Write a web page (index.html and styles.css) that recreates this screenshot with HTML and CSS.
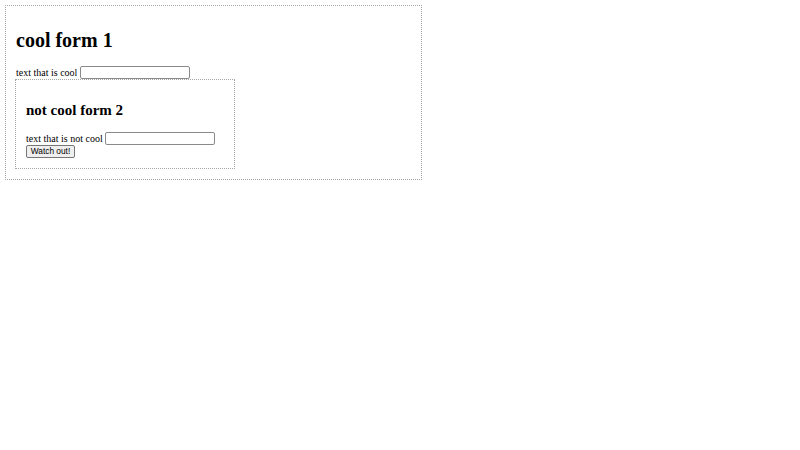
FILE: index.html
```html
<!DOCTYPE html>
<html>
<head>
<meta charset="utf-8">
<title>forms</title>
<link rel="stylesheet" href="styles.css">
</head>
<body>
<form class="box outer">
  <h1 class="title">cool form 1</h1>
  <label class="label" for="cool">text that is cool</label> <input class="field" id="cool" type="text">
  <div class="box inner">
    <h2 class="subtitle">not cool form 2</h2>
    <label class="label" for="notcool">text that is not cool</label> <input class="field" id="notcool" type="text">
    <br>
    <button class="btn" type="button">Watch out!</button>
  </div>
</form>
</body>
</html>
```

FILE: styles.css
```css
html, body {
  background: #ffffff;
}
body {
  margin: 5px;
  font-family: "Liberation Serif", "Times New Roman", serif;
  font-size: 10px;
  color: #000000;
}
.box {
  border: 1px dotted #a6a6a6;
  padding: 10px;
  width: 50%;
}
.outer {
  margin: 0;
}
.inner {
  margin: 0 0 0 -1px;
}
.title {
  font-size: 20px;
  font-weight: bold;
  margin: 13.4px 0;
}
.subtitle {
  font-size: 15px;
  font-weight: bold;
  margin: 12.45px 0;
}
.label {
  font-size: 10px;
}
.field {
  box-sizing: border-box;
  width: 110px;
  height: 13px;
  padding: 0 1px;
  margin: 0;
  border: 1px solid #8a8a8a;
  border-radius: 2px;
  background: #ffffff;
  font-family: "Liberation Sans", Arial, sans-serif;
  font-size: 8.33px;
  vertical-align: baseline;
}
.btn {
  box-sizing: border-box;
  height: 13px;
  margin: 0;
  padding: 0 3.75px;
  border: 1px solid #767676;
  border-radius: 2px;
  background: #efefef;
  color: #000000;
  font-family: "Liberation Sans", Arial, sans-serif;
  font-size: 8.33px;
  line-height: 11px;
}
```
